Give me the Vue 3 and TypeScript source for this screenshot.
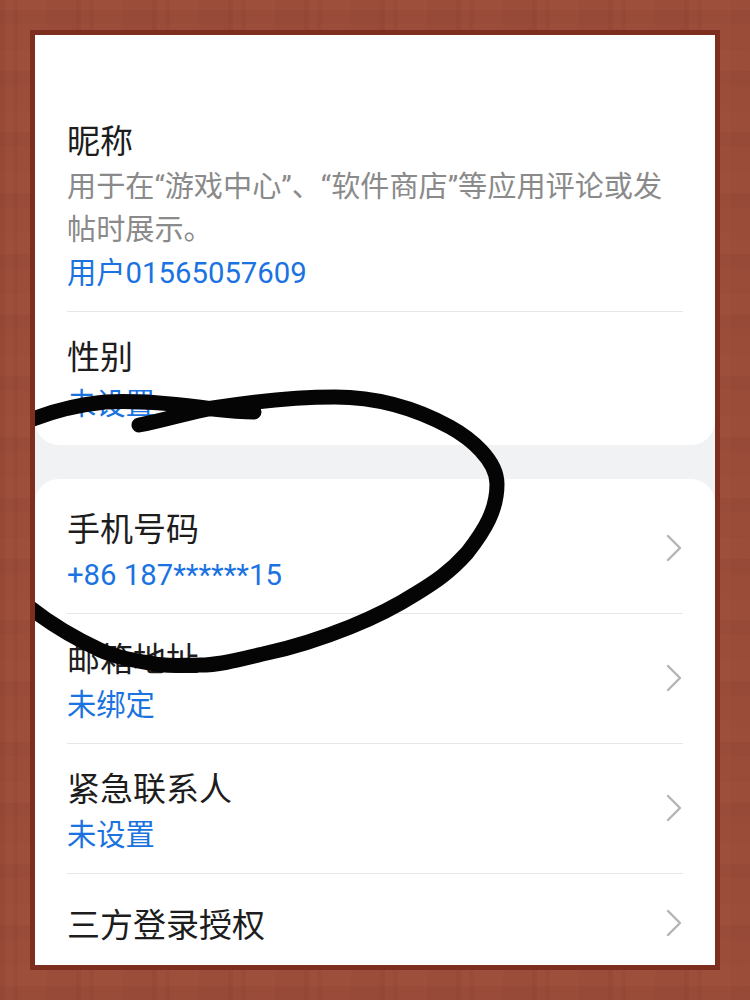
<script setup lang="ts">
interface Row {
  title: string
  desc?: string
  value?: string
  chevron?: boolean
}

const firstCard: Row[] = [
  {
    title: '昵称',
    desc: '用于在“游戏中心”、“软件商店”等应用评论或发帖时展示。',
    value: '用户01565057609',
  },
  { title: '性别', value: '未设置' },
]

const secondCard: Row[] = [
  { title: '手机号码', value: '+86 187******15', chevron: true },
  { title: '邮箱地址', value: '未绑定', chevron: true },
  { title: '紧急联系人', value: '未设置', chevron: true },
  { title: '三方登录授权', chevron: true },
]
</script>

<template>
  <div class="frame">
    <div class="screen">
      <div class="top-space"></div>
      <section class="card first">
        <div v-for="row in firstCard" :key="row.title" class="row">
          <div class="texts">
            <div class="title">{{ row.title }}</div>
            <div v-if="row.desc" class="desc">{{ row.desc }}</div>
            <div v-if="row.value" class="value">{{ row.value }}</div>
          </div>
        </div>
      </section>
      <section class="card second">
        <div v-for="row in secondCard" :key="row.title" class="row" :class="{ bare: !row.value }">
          <div class="texts">
            <div class="title">{{ row.title }}</div>
            <div v-if="row.value" class="value">{{ row.value }}</div>
          </div>
          <svg v-if="row.chevron" class="chevron" viewBox="0 0 16 28" aria-hidden="true">
            <path d="M2 2 L14 14 L2 26" />
          </svg>
        </div>
      </section>
      <svg class="scribble" viewBox="35 35 680 930" aria-hidden="true">
        <path d="M28 421 C50 412 75 405 105 402 C140 400 178 404 213 409 C230 411 245 412 254 412" />
        <path d="M139 425 C165 420 190 412 213 408 C250 402 295 397 335 397 C375 397 415 408 450 427 C470 438 497 460 497 484 C497 510 485 530 467 553 C450 572 435 582 417 593 C395 607 375 617 350 627 C325 637 295 647 267 653 C245 658 222 665 200 665 C180 665 165 667 150 663 C130 660 115 657 100 650 C85 643 55 628 28 606" />
      </svg>
    </div>
  </div>
</template>

<style>
html,
body {
  margin: 0;
  background: #9c4d3a;
}
</style>

<style scoped>
.frame {
  box-sizing: border-box;
  width: 750px;
  height: 1000px;
  padding: 30px;
  background-color: #9c4d3a;
  background-image:
    repeating-linear-gradient(90deg, rgba(120, 50, 35, 0.14) 0 5px, rgba(170, 95, 75, 0.05) 5px 13px, rgba(120, 50, 35, 0.08) 13px 18px, rgba(170, 95, 75, 0.07) 18px 47px, rgba(120, 50, 35, 0.04) 47px 76px),
    repeating-linear-gradient(0deg, rgba(120, 50, 35, 0.1) 0 14px, rgba(170, 95, 75, 0.06) 14px 35px, rgba(120, 50, 35, 0.03) 35px 61px);
}

.screen {
  position: relative;
  box-sizing: border-box;
  width: 690px;
  height: 940px;
  border: 5px solid #7e2e1e;
  overflow: hidden;
  background: #f1f2f4;
  font-family: Roboto, "Noto Sans CJK SC", sans-serif;
}

.top-space {
  height: 61px;
  background: #ffffff;
}

.card {
  background: #ffffff;
  padding: 0 32px;
}

.card.first {
  border-radius: 24px;
  margin-top: -24px;
  padding-top: 24px;
}

.card.second {
  border-radius: 24px 24px 0 0;
  margin-top: 34px;
  padding-top: 5px;
  height: 486px;
}

.row {
  display: flex;
  align-items: center;
  justify-content: space-between;
  padding: 22px 0 16px;
  border-bottom: 1px solid #e6e6e6;
}

.row:last-child {
  border-bottom: none;
}

.first .row:last-child {
  padding-bottom: 19px;
}

.first .title {
  line-height: 48px;
}

.row.bare {
  padding-top: 28px;
}

.texts {
  min-width: 0;
  flex: 1;
}

.title {
  font-size: 33px;
  line-height: 47px;
  color: #1d1d1d;
}

.desc {
  font-size: 29.15px;
  line-height: 43px;
  margin-bottom: -1px;
  color: #8a8a8a;
}

.value {
  font-size: 29.3px;
  line-height: 44px;
  color: #1a73e0;
}

.chevron {
  flex: none;
  width: 16px;
  height: 28px;
  margin: 0 1px 8px 0;
  fill: none;
  stroke: #b4b4b4;
  stroke-width: 2.4;
  stroke-linecap: round;
  stroke-linejoin: round;
}

.bare .chevron {
  margin-bottom: 6px;
}

.scribble {
  position: absolute;
  inset: 0;
  width: 680px;
  height: 930px;
  fill: none;
  stroke: #050505;
  stroke-width: 15;
  stroke-linecap: round;
  stroke-linejoin: round;
  pointer-events: none;
}
</style>
